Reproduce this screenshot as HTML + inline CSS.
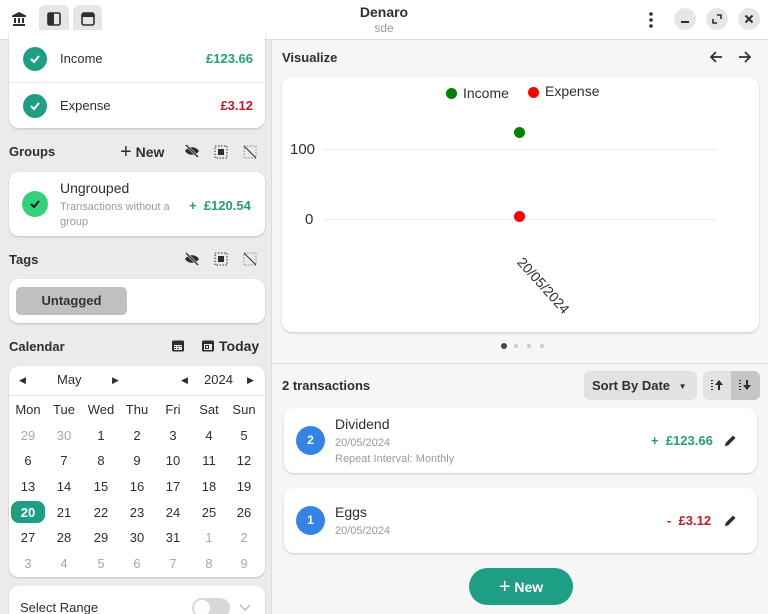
<!DOCTYPE html>
<html style="overflow:hidden;width:768px;height:614px"><head><meta charset="utf-8"><style>
*{box-sizing:border-box;margin:0;padding:0}
body{width:768px;height:614px;overflow:hidden;font-family:"Liberation Sans",sans-serif;font-size:13px;color:#2e2e2e;background:#f6f6f6;position:relative}
.a{position:absolute}
.card{position:absolute;background:#fff;border-radius:10px;box-shadow:0 1px 2px rgba(0,0,0,.18)}
.b{font-weight:bold}
.chk{position:absolute;width:24px;height:24px;border-radius:50%;background:#1e9e84}
.chk svg{position:absolute;left:5px;top:5px}
.g{color:#26a269;font-weight:bold}
.r{color:#c01c28;font-weight:bold}
.c{position:absolute;width:36px;text-align:center;transform:translateX(-18px)}
.dim{color:#a8a8a8}
.hb{position:absolute;width:22px;height:22px;border-radius:50%;background:#e6e6e6}
</style></head><body>
<div class="a" style="left:0;top:40px;width:272px;height:574px;background:#ebebeb;border-right:1px solid #dcdcdc"></div>
<div class="a" style="left:0;top:0;width:768px;height:40px;background:#fff;border-bottom:1px solid #dadada"></div>
<svg class="a" style="left:11px;top:11px" width="16" height="16" viewBox="0 0 16 16"><path d="M8 1L1 4.5V6h14V4.5z M2 13h12v2H2z M3 7h2v5H3z M7 7h2v5H7z M11 7h2v5h-2z" fill="#2e2e2e"/></svg>
<div class="a" style="left:39px;top:5px;width:30px;height:29px;border-radius:6px;background:#e6e6e6"></div>
<svg class="a" style="left:47px;top:12px" width="14" height="14"><rect x="1" y="1" width="12" height="12" rx="1.5" fill="none" stroke="#2e2e2e" stroke-width="1.6"/><rect x="1" y="1" width="6" height="12" fill="#2e2e2e"/></svg>
<div class="a" style="left:73px;top:5px;width:29px;height:29px;border-radius:6px;background:#e6e6e6"></div>
<svg class="a" style="left:81px;top:12px" width="14" height="14"><rect x="1" y="1" width="12" height="12" rx="2" fill="none" stroke="#2e2e2e" stroke-width="1.6"/><rect x="1" y="1" width="12" height="4" fill="#2e2e2e"/></svg>
<div class="a b" style="left:272px;width:224px;top:4px;text-align:center;font-size:14px">Denaro</div>
<div class="a" style="left:272px;width:224px;top:21px;text-align:center;font-size:12px;color:#9a9a9a">sde</div>
<svg class="a" style="left:648px;top:11px" width="6" height="18"><circle cx="3" cy="3" r="1.8" fill="#2e2e2e"/><circle cx="3" cy="9" r="1.8" fill="#2e2e2e"/><circle cx="3" cy="15" r="1.8" fill="#2e2e2e"/></svg>
<div class="hb" style="left:674px;top:8px"></div><div class="a" style="left:681px;top:21px;width:8px;height:2px;background:#2e2e2e"></div>
<div class="hb" style="left:706px;top:8px"></div><svg class="a" style="left:712px;top:14px" width="10" height="10"><path d="M5 1h4v4M5 9H1V5" fill="none" stroke="#2e2e2e" stroke-width="1.6"/></svg>
<div class="hb" style="left:738px;top:8px"></div><svg class="a" style="left:744px;top:14px" width="10" height="10"><path d="M1.5 1.5l7 7M8.5 1.5l-7 7" stroke="#2e2e2e" stroke-width="2"/></svg>

<div class="card" style="left:9px;top:30px;width:256px;height:98px;border-radius:0 0 10px 10px"></div>
<div class="a" style="left:9px;top:82px;width:256px;height:1px;background:#ececec"></div>
<div class="chk" style="left:23px;top:47px"><svg width="14" height="14"><path d="M3 7l3 3 5-6" fill="none" stroke="#fff" stroke-width="2"/></svg></div>
<div class="a" style="left:60px;top:51px">Income</div><div class="a g" style="right:515px;top:51px">£123.66</div>
<div class="chk" style="left:23px;top:94px"><svg width="14" height="14"><path d="M3 7l3 3 5-6" fill="none" stroke="#fff" stroke-width="2"/></svg></div>
<div class="a" style="left:60px;top:98px">Expense</div><div class="a r" style="right:515px;top:98px">£3.12</div>

<div class="a b" style="left:9px;top:144px">Groups</div>
<div class="a b" style="left:120px;top:140px;font-size:14px"><span style="font-weight:normal;font-size:20px;position:relative;top:1px">+</span> New</div>
<svg class="a" style="left:184px;top:144px" width="16" height="14"><path d="M1 7c3-5 11-5 14 0c-3 5-11 5-14 0z" fill="#2e2e2e"/><path d="M2 1l12 12" stroke="#ebebeb" stroke-width="2.5"/><path d="M2 1l12 12" stroke="#2e2e2e" stroke-width="1.3"/></svg>
<svg class="a" style="left:214px;top:145px" width="14" height="14"><rect x="1" y="1" width="12" height="12" fill="none" stroke="#2e2e2e" stroke-dasharray="1.5 1.5"/><rect x="4" y="4" width="6" height="6" fill="#2e2e2e"/></svg>
<svg class="a" style="left:243px;top:145px" width="14" height="14"><rect x="1" y="1" width="12" height="12" fill="none" stroke="#888" stroke-dasharray="1.5 1.5"/><path d="M1 1l12 12" stroke="#2e2e2e"/></svg>

<div class="card" style="left:9px;top:172px;width:256px;height:64px"></div>
<div class="a" style="left:22px;top:191px;width:26px;height:26px;border-radius:50%;background:#33d17a"><svg style="position:absolute;left:6px;top:6px" width="14" height="14"><path d="M3 7l3 3 5-6" fill="none" stroke="#1a1a1a" stroke-width="2"/></svg></div>
<div class="a" style="left:60px;top:180px;font-size:14px">Ungrouped</div>
<div class="a" style="left:60px;top:200px;font-size:11px;color:#9a9a9a;line-height:15px;width:125px">Transactions without a group</div>
<div class="a g" style="left:189px;top:198px">+&nbsp; £120.54</div>

<div class="a b" style="left:9px;top:252px">Tags</div>
<svg class="a" style="left:184px;top:252px" width="16" height="14"><path d="M1 7c3-5 11-5 14 0c-3 5-11 5-14 0z" fill="#2e2e2e"/><path d="M2 1l12 12" stroke="#ebebeb" stroke-width="2.5"/><path d="M2 1l12 12" stroke="#2e2e2e" stroke-width="1.3"/></svg>
<svg class="a" style="left:214px;top:252px" width="14" height="14"><rect x="1" y="1" width="12" height="12" fill="none" stroke="#2e2e2e" stroke-dasharray="1.5 1.5"/><rect x="4" y="4" width="6" height="6" fill="#2e2e2e"/></svg>
<svg class="a" style="left:243px;top:252px" width="14" height="14"><rect x="1" y="1" width="12" height="12" fill="none" stroke="#888" stroke-dasharray="1.5 1.5"/><path d="M1 1l12 12" stroke="#2e2e2e"/></svg>
<div class="card" style="left:9px;top:279px;width:256px;height:44px"></div>
<div class="a b" style="left:16px;top:287px;width:111px;height:28px;border-radius:5px;background:#c0c0c0;text-align:center;line-height:28px;color:#333">Untagged</div>

<div class="a b" style="left:9px;top:339px">Calendar</div>
<svg class="a" style="left:171px;top:339px" width="14" height="14"><rect x="1" y="1.5" width="12" height="11" rx="1.5" fill="#2e2e2e"/><rect x="3" y="6" width="8" height="5" fill="#ebebeb"/><path d="M3.5 7.5h1.5M6.3 7.5h1.5M9 7.5h1.5M3.5 9.5h1.5M6.3 9.5h1.5" stroke="#2e2e2e"/></svg>
<svg class="a" style="left:201px;top:339px" width="14" height="14"><rect x="1" y="1.5" width="12" height="11" rx="1.5" fill="#2e2e2e"/><rect x="3" y="5" width="8" height="6" fill="#ebebeb"/><rect x="4.5" y="6.5" width="3" height="3" fill="none" stroke="#2e2e2e"/></svg>
<div class="a b" style="left:219px;top:338px;font-size:14px">Today</div>

<div class="card" style="left:9px;top:366px;width:256px;height:211px"></div>
<div class="a" style="left:9px;top:395px;width:256px;height:1px;background:#e4e4e4"></div>
<div class="a" style="left:19px;top:375px;font-size:9px">◀</div>
<div class="a" style="left:57px;top:372px">May</div>
<div class="a" style="left:112px;top:375px;font-size:9px">▶</div>
<div class="a" style="left:181px;top:375px;font-size:9px">◀</div>
<div class="a" style="left:204px;top:372px">2024</div>
<div class="a" style="left:247px;top:375px;font-size:9px">▶</div>
<div class="a" style="left:11px;top:501px;width:34px;height:22px;border-radius:8px;background:#1e9e84"></div>
<div id="cal"></div>
<div class="card" style="left:9px;top:586px;width:256px;height:40px"></div>
<div class="a" style="left:20px;top:600px">Select Range</div>
<div class="a" style="left:192px;top:598px;width:38px;height:20px;border-radius:10px;background:#d8d8d8"></div>
<div class="a" style="left:194px;top:600px;width:16px;height:16px;border-radius:50%;background:#fff"></div>
<svg class="a" style="left:239px;top:604px" width="12" height="8"><path d="M1 1l5 5 5-5" fill="none" stroke="#bbb" stroke-width="1.5"/></svg>

<div class="a b" style="left:282px;top:50px">Visualize</div>
<svg class="a" style="left:709px;top:50px" width="14" height="14"><path d="M13 7H2M7 2L2 7l5 5" fill="none" stroke="#2e2e2e" stroke-width="1.7"/></svg>
<svg class="a" style="left:738px;top:50px" width="14" height="14"><path d="M1 7h11M7 2l5 5-5 5" fill="none" stroke="#2e2e2e" stroke-width="1.7"/></svg>
<div class="card" style="left:282px;top:77px;width:477px;height:255px"></div>
<div class="a" style="left:446px;top:88px;width:11px;height:11px;border-radius:50%;background:#008000"></div>
<div class="a" style="left:463px;top:85px;font-size:14px">Income</div>
<div class="a" style="left:528px;top:87px;width:11px;height:11px;border-radius:50%;background:#f00"></div>
<div class="a" style="left:545px;top:83px;font-size:14px">Expense</div>
<div class="a" style="left:324px;top:149px;width:392px;height:1px;background:#eee"></div>
<div class="a" style="left:324px;top:219px;width:392px;height:1px;background:#eee"></div>
<div class="a" style="left:290px;top:141px;font-size:15px">100</div>
<div class="a" style="left:305px;top:211px;font-size:15px">0</div>
<div class="a" style="left:514px;top:127px;width:11px;height:11px;border-radius:50%;background:#008000"></div>
<div class="a" style="left:514px;top:211px;width:11px;height:11px;border-radius:50%;background:#f00"></div>
<div class="a" style="font-size:14px;transform:rotate(48deg);transform-origin:0 0;white-space:nowrap;left:526px;top:254px">20/05/2024</div>
<div class="a" style="left:501px;top:343px;width:6px;height:6px;border-radius:50%;background:#444"></div>
<div class="a" style="left:514px;top:344px;width:4px;height:4px;border-radius:50%;background:#ccc"></div>
<div class="a" style="left:527px;top:344px;width:4px;height:4px;border-radius:50%;background:#ccc"></div>
<div class="a" style="left:540px;top:344px;width:4px;height:4px;border-radius:50%;background:#ccc"></div>
<div class="a" style="left:273px;top:363px;width:495px;height:1px;background:#e0e0e0"></div>

<div class="a b" style="left:282px;top:378px">2 transactions</div>
<div class="a b" style="left:584px;top:371px;width:113px;height:29px;border-radius:6px;background:#e2e2e2;padding:7px 0 0 8px">Sort By Date <span style="font-size:8px;margin-left:5px;position:relative;top:-1px">▼</span></div>
<div class="a" style="left:703px;top:371px;width:57px;height:29px;border-radius:6px;background:#e2e2e2;overflow:hidden"><div style="position:absolute;left:28px;top:0;width:29px;height:29px;background:#c6c6c6"></div></div>
<svg class="a" style="left:710px;top:378px" width="14" height="14"><path d="M2 2v1M2 5v1M2 8v1M2 11v1" stroke="#2e2e2e" stroke-width="2"/><path d="M9 2L5 7h3v5h2V7h3z" fill="#2e2e2e"/></svg>
<svg class="a" style="left:738px;top:378px" width="14" height="14"><path d="M2 2v1M2 5v1M2 8v1M2 11v1" stroke="#2e2e2e" stroke-width="2"/><path d="M9 12L5 7h3V2h2v5h3z" fill="#2e2e2e"/></svg>

<div class="card" style="left:284px;top:408px;width:473px;height:65px"></div>
<div class="a b" style="left:296px;top:426px;width:29px;height:29px;border-radius:50%;background:#3584e4;color:#fff;text-align:center;line-height:29px;font-size:12px">2</div>
<div class="a" style="left:335px;top:416px;font-size:14px">Dividend</div>
<div class="a" style="left:335px;top:437px;font-size:11px;color:#9a9a9a">20/05/2024</div>
<div class="a" style="left:335px;top:453px;font-size:11px;color:#9a9a9a">Repeat Interval: Monthly</div>
<div class="a g" style="left:651px;top:433px">+&nbsp; £123.66</div>
<svg class="a" style="left:724px;top:434px" width="13" height="13"><path d="M1 12l.5-3L9 1.5l2.5 2.5L4 11.5z" fill="#2e2e2e"/></svg>

<div class="card" style="left:284px;top:488px;width:473px;height:65px"></div>
<div class="a b" style="left:296px;top:506px;width:29px;height:29px;border-radius:50%;background:#3584e4;color:#fff;text-align:center;line-height:29px;font-size:12px">1</div>
<div class="a" style="left:335px;top:504px;font-size:14px">Eggs</div>
<div class="a" style="left:335px;top:525px;font-size:11px;color:#9a9a9a">20/05/2024</div>
<div class="a r" style="left:667px;top:513px">-&nbsp; £3.12</div>
<svg class="a" style="left:724px;top:514px" width="13" height="13"><path d="M1 12l.5-3L9 1.5l2.5 2.5L4 11.5z" fill="#2e2e2e"/></svg>

<div class="a b" style="left:469px;top:568px;width:104px;height:37px;border-radius:19px;background:#1e9e84;color:#fff;text-align:center;line-height:37px;font-size:14px"><span style="font-weight:normal;font-size:20px;position:relative;top:1px">+</span> New</div>

<script>
var cx=[28,64,101,137,173,209,244],h=['Mon','Tue','Wed','Thu','Fri','Sat','Sun'],s='';
for(var i=0;i<7;i++)s+='<div class="c" style="left:'+cx[i]+'px;top:402px">'+h[i]+'</div>';
var d=[29,30];for(var i=1;i<=31;i++)d.push(i);for(var i=1;i<=9;i++)d.push(i);
var ys=[428,453,479,505,530,556];
for(var k=0;k<42;k++){var r=Math.floor(k/7),c=k%7,dim=(k<2||k>32);
var st=(k==21)?'color:#fff;font-weight:bold;':'';
s+='<div class="c'+(dim?' dim':'')+'" style="'+st+'left:'+cx[c]+'px;top:'+ys[r]+'px">'+d[k]+'</div>';}
document.getElementById('cal').innerHTML=s;
</script>
</body></html>
